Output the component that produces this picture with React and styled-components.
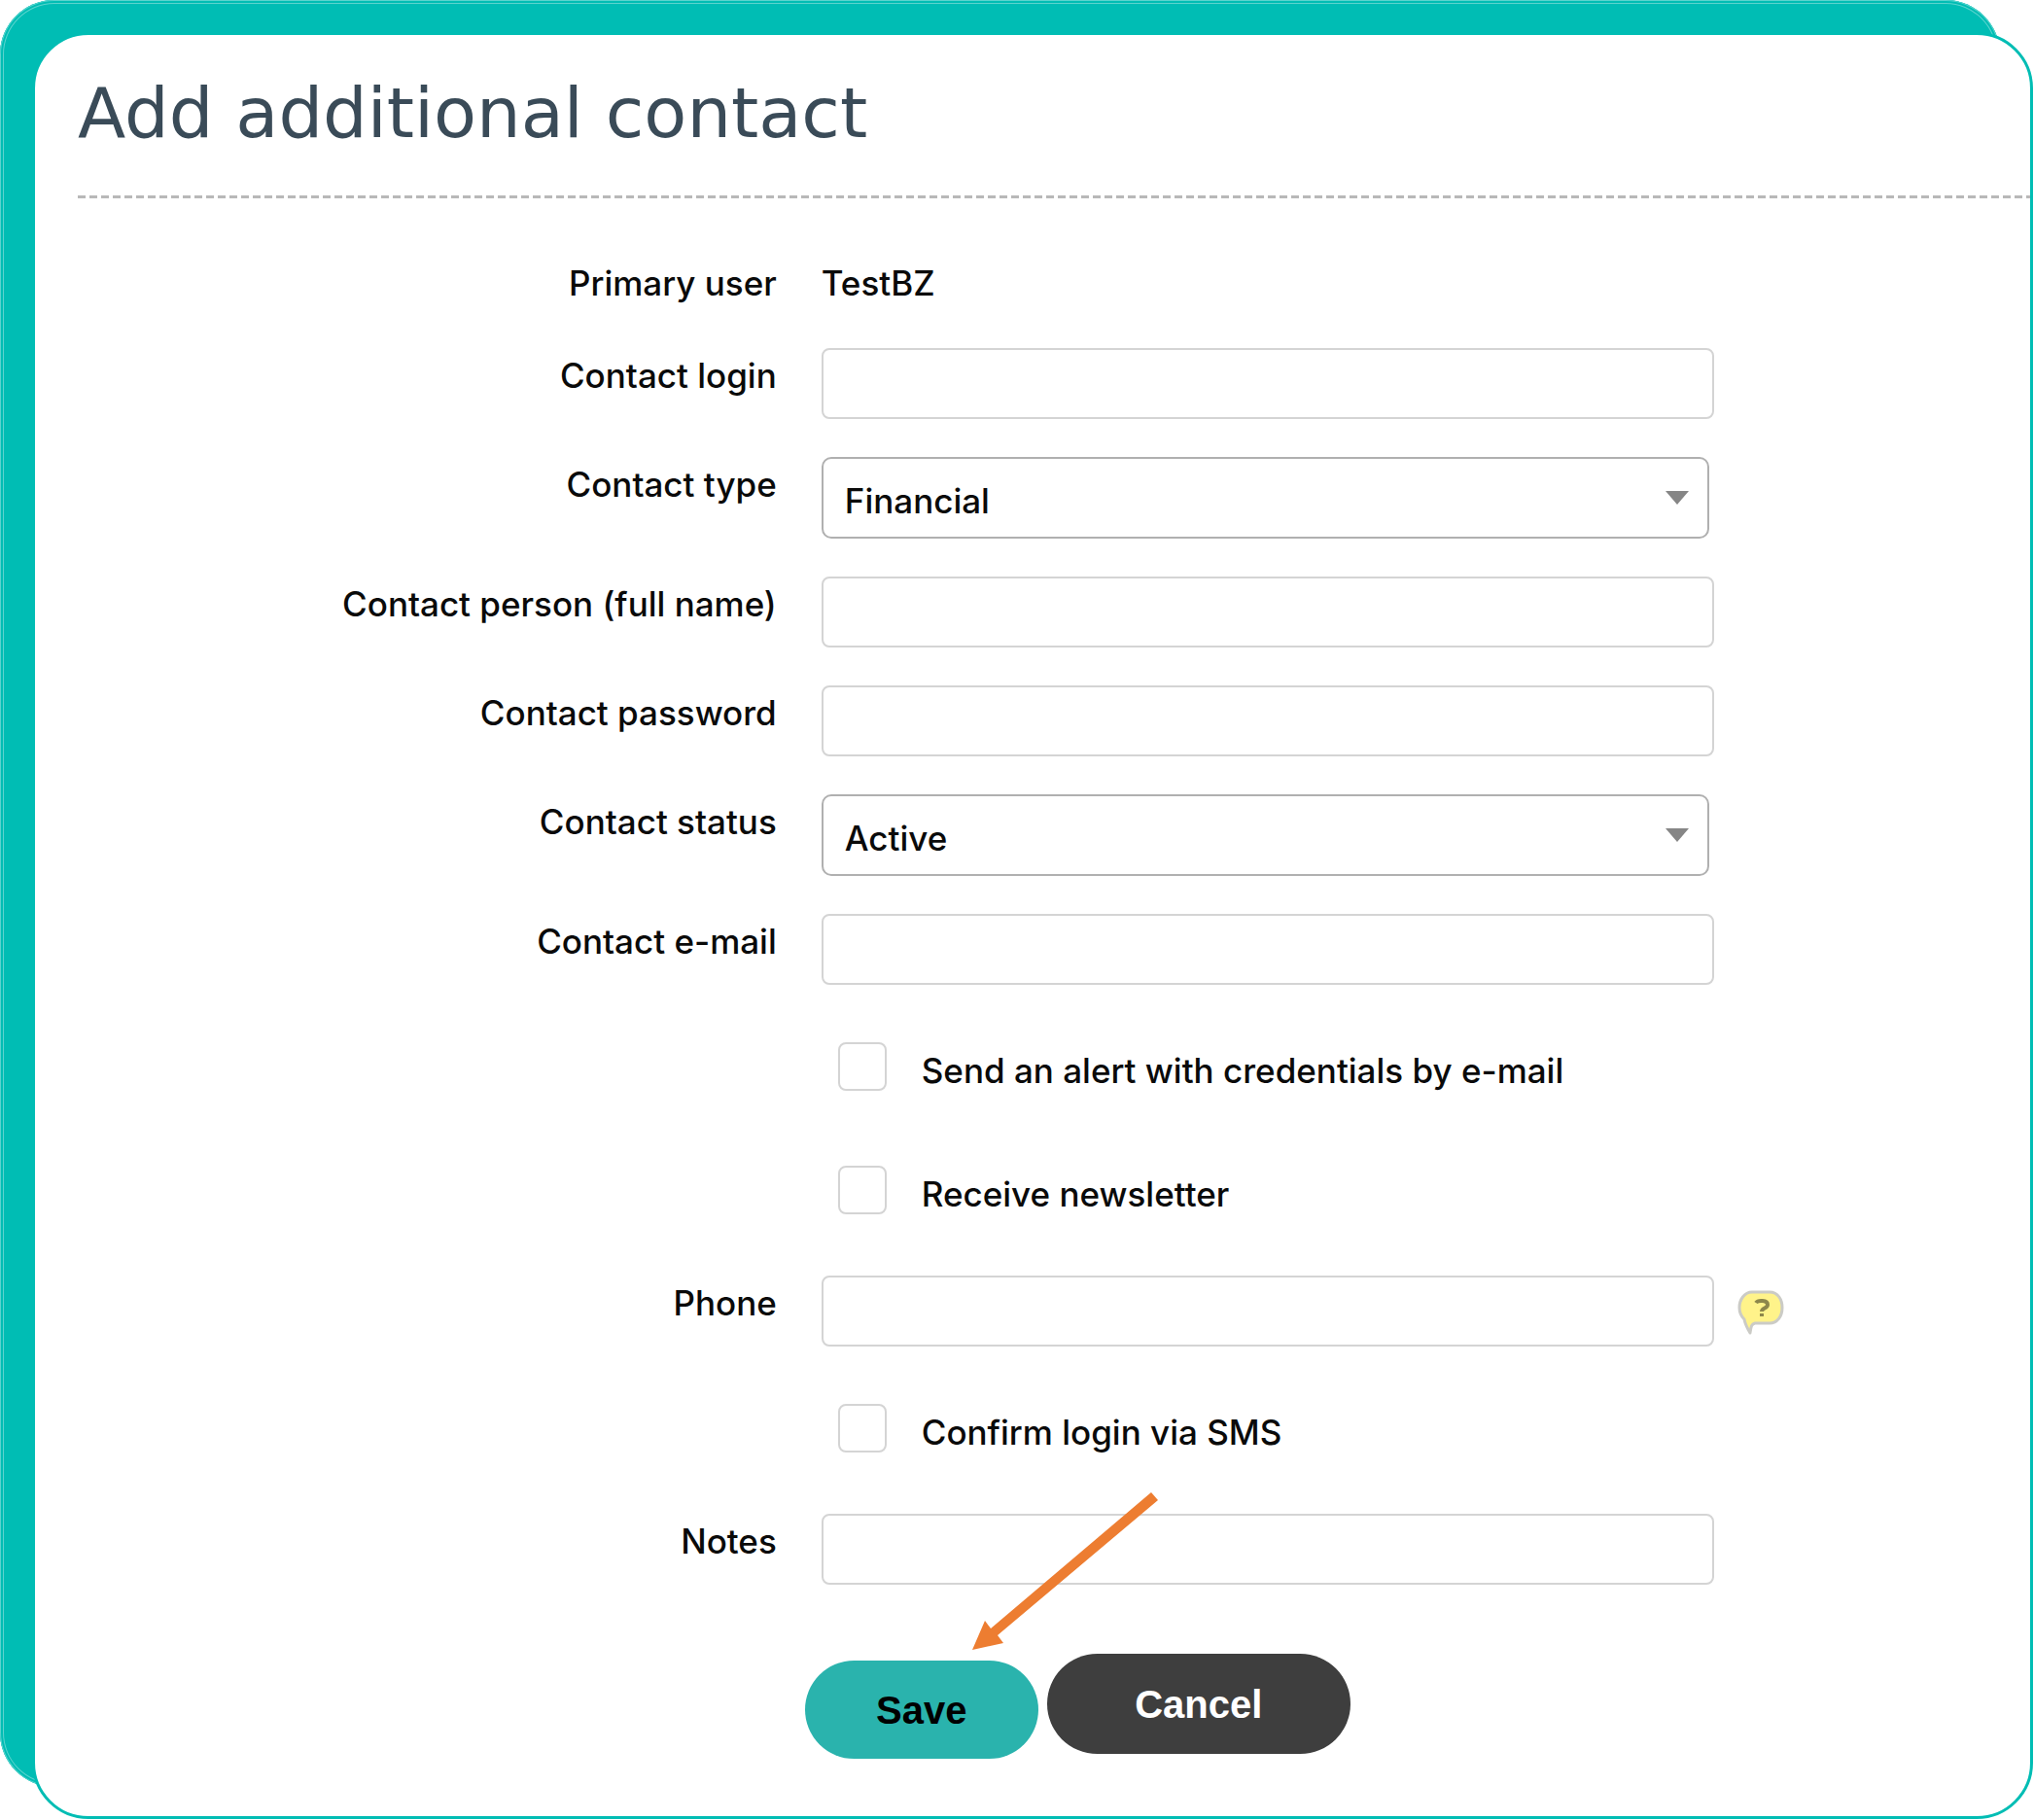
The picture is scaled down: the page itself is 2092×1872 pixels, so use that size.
import { useState } from 'react';
import styled, { createGlobalStyle } from 'styled-components';

const GlobalStyle = createGlobalStyle`
  * {
    box-sizing: border-box;
  }

  body {
    margin: 0;
    background-color: #ffffff;
    color: #0a0a0a;
    font-family: Inter, "Liberation Sans", sans-serif;
    font-size: 35px;
    font-weight: 500;
  }
`;

const Frame = styled.div`
  min-height: 100vh;
  display: grid;
`;

const Backdrop = styled.div`
  grid-area: 1 / 1;
  margin: 0 35px 34px 0;
  border-radius: 56px;
  background-color: #00bdb4;
  box-shadow: inset 0 0 0 1px #5cd4ce, inset 0 0 0 3px #00bdb4, inset 0 0 0 4px #5cd4ce;
`;

const Card = styled.main`
  grid-area: 1 / 1;
  margin: 33px 1px 1px 33px;
  padding: 30px 0 59px 44px;
  border: 3px solid #00bdb4;
  border-radius: 58px;
  background-color: #ffffff;
`;

const Title = styled.h1`
  margin: 0;
  font-family: "DejaVu Sans", Verdana, sans-serif;
  font-size: 72px;
  font-weight: 400;
  line-height: 100px;
  color: #3a4b58;
`;

const Divider = styled.hr`
  height: 3px;
  margin: 35px 0 0;
  border: none;
  background-image: repeating-linear-gradient(to right, #b8b8b8 0 8px, transparent 8px 12px);
`;

const Form = styled.form`
  padding-top: 59px;
  display: flex;
  flex-direction: column;
  gap: 39px;
`;

const Row = styled.div`
  display: grid;
  grid-template-columns: minmax(0, 37fr) minmax(0, 64fr);
  column-gap: 46px;
`;

const Label = styled.label`
  line-height: 56px;
  text-align: right;
`;

const Field = styled.div`
  grid-column: 2;
  position: relative;
  display: flex;
  align-items: center;
  gap: 24px;
`;

const Input = styled.input`
  width: 100%;
  max-width: 918px;
  height: 73px;
  padding: 0 24px;
  border: 2px solid #d4d4d4;
  border-radius: 8px;
  background-color: #ffffff;
  color: inherit;
  font: inherit;
`;

const SelectBox = styled.div`
  width: 100%;
  max-width: 913px;
  display: grid;
  align-items: center;
`;

const Select = styled.select`
  grid-area: 1 / 1;
  height: 84px;
  padding: 6px 60px 0 22px;
  appearance: none;
  border: 2px solid #b0b0b0;
  border-radius: 10px;
  background-color: #ffffff;
  color: inherit;
  font: inherit;
`;

const Caret = styled.svg`
  grid-area: 1 / 1;
  justify-self: end;
  width: 24px;
  height: 14px;
  margin-right: 21px;
  pointer-events: none;
`;

const CheckGroup = styled.div`
  grid-column: 2;
  padding: 20px 0 24px 17px;
  display: flex;
  flex-direction: column;
  gap: 77px;
`;

const CheckLabel = styled.label`
  display: flex;
  align-items: center;
  gap: 36px;
  line-height: 42px;
`;

const Checkbox = styled.input`
  width: 50px;
  height: 50px;
  margin: 0;
  flex-shrink: 0;
  appearance: none;
  border: 2px solid #d4d4d4;
  border-radius: 8px;
  background-color: #ffffff;

  &:checked {
    background-color: #2ab3ad;
  }
`;

const CheckText = styled.span`
  padding-top: 8px;
`;

const HelpButton = styled.button`
  width: 48px;
  height: 48px;
  padding: 0;
  border: none;
  background: none;
  cursor: pointer;
`;

const Pointer = styled.svg`
  position: absolute;
  top: -22px;
  left: 155px;
  width: 191px;
  height: 162px;
  pointer-events: none;
`;

const Actions = styled.div`
  grid-column: 2;
  margin-left: -17px;
  padding-top: 32px;
  display: flex;
  align-items: flex-start;
  gap: 9px;
`;

const Button = styled.button`
  width: 312px;
  height: 103px;
  padding: 2px 0 0;
  border: none;
  border-radius: 52px;
  background-color: #3e3e3e;
  color: #ffffff;
  font-family: "Liberation Sans", Arial, sans-serif;
  font-size: 40px;
  font-weight: 700;
  cursor: pointer;
`;

const SaveButton = styled(Button)`
  width: 240px;
  height: 101px;
  margin-top: 7px;
  background-color: #2ab3ad;
  color: #000000;
`;

function TextField({ id, label, type = 'text', children }) {
  return (
    <Row>
      <Label htmlFor={ id }>{ label }</Label>
      <Field>
        <Input id={ id } name={ id } type={ type } />
        { children }
      </Field>
    </Row>
  );
}

function SelectField({ id, label, options }) {
  const [value, setValue] = useState(options[0]);

  return (
    <Row>
      <Label htmlFor={ id }>{ label }</Label>
      <Field>
        <SelectBox>
          <Select id={ id } name={ id } value={ value } onChange={ (e) => setValue(e.target.value) }>
            { options.map((option) => (
              <option key={ option }>{ option }</option>
            )) }
          </Select>
          <Caret viewBox="0 0 24 14" aria-hidden="true">
            <path d="M0 0H24L12 14Z" fill="#868686" />
          </Caret>
        </SelectBox>
      </Field>
    </Row>
  );
}

function CheckField({ name, children }) {
  return (
    <CheckLabel>
      <Checkbox type="checkbox" name={ name } />
      <CheckText>{ children }</CheckText>
    </CheckLabel>
  );
}

function HelpIcon() {
  return (
    <svg width="48" height="48" viewBox="0 0 48 48" aria-hidden="true">
      <path
        d="M15 4H33C42 4 46 12 46 20C46 29 41 36 33 36H18C14 37 14 40 13 46C10 41 8 37 7 32C4 29 2 25 2 20C2 12 7 4 15 4Z"
        fill="#fff38a"
        stroke="#cbcbc6"
        strokeWidth="3"
        strokeLinejoin="round"
      />
      <path d="M19 15C21 12 31 12 31 17C31 21 25 20 25 24" fill="none" stroke="#8d874b" strokeWidth="4" />
      <path d="M23 26H27V29H23Z" fill="#8d874b" />
    </svg>
  );
}

function App() {
  return (
    <>
      <GlobalStyle />
      <Frame>
        <Backdrop />
        <Card>
          <Title>Add additional contact</Title>
          <Divider />
          <Form onSubmit={ (e) => e.preventDefault() }>
            <Row>
              <Label as="span">Primary user</Label>
              <Field>TestBZ</Field>
            </Row>
            <TextField id="login" label="Contact login" />
            <SelectField id="type" label="Contact type" options={ ['Financial'] } />
            <TextField id="person" label="Contact person (full name)" />
            <TextField id="password" label="Contact password" type="password" />
            <SelectField id="status" label="Contact status" options={ ['Active'] } />
            <TextField id="email" label="Contact e-mail" type="email" />
            <Row>
              <CheckGroup>
                <CheckField name="alert">Send an alert with credentials by e-mail</CheckField>
                <CheckField name="newsletter">Receive newsletter</CheckField>
              </CheckGroup>
            </Row>
            <TextField id="phone" label="Phone" type="tel">
              <HelpButton type="button" aria-label="Phone help">
                <HelpIcon />
              </HelpButton>
            </TextField>
            <Row>
              <CheckGroup>
                <CheckField name="sms">Confirm login via SMS</CheckField>
              </CheckGroup>
            </Row>
            <TextField id="notes" label="Notes">
              <Pointer viewBox="0 0 191 162" aria-hidden="true">
                <path d="M0 162L13 132L19 140L184 0L191 8L26 147L32 155Z" fill="#ed7d31" />
              </Pointer>
            </TextField>
            <Row>
              <Actions>
                <SaveButton type="submit">Save</SaveButton>
                <Button type="button">Cancel</Button>
              </Actions>
            </Row>
          </Form>
        </Card>
      </Frame>
    </>
  );
}

export default App;
